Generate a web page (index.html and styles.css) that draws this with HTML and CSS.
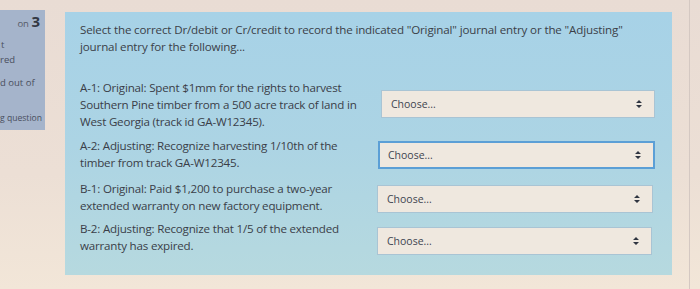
FILE: index.html
```html
<!DOCTYPE html>
<html>
<head>
<meta charset="utf-8">
<link rel="stylesheet" href="styles.css">
</head>
<body>
<div class="page">
  <aside class="info">
    <div class="qno">on <b>3</b></div>
    <div class="st s1">t</div>
    <div class="st s2">red</div>
    <div class="st s3">d out of</div>
    <div class="st s4">g question</div>
  </aside>
  <main class="content">
    <p class="prompt">Select the correct Dr/debit or Cr/credit to record the indicated "Original" journal entry or the "Adjusting" journal entry for the following...</p>
    <div class="rows">
      <div class="row r1">
        <div class="label">A-1: Original: Spent $1mm for the rights to harvest Southern Pine timber from a 500 acre track of land in West Georgia (track id GA-W12345).</div>
        <div class="select"><span>Choose...</span><svg class="arrows" width="6" height="8" viewBox="0 0 6 8"><path d="M3 0 L6 3 L0 3 Z M0 5 L6 5 L3 8 Z" fill="#2f3541"/></svg></div>
      </div>
      <div class="row r2">
        <div class="label">A-2: Adjusting: Recognize harvesting 1/10th of the timber from track GA-W12345.</div>
        <div class="select focus"><span>Choose...</span><svg class="arrows" width="6" height="8" viewBox="0 0 6 8"><path d="M3 0 L6 3 L0 3 Z M0 5 L6 5 L3 8 Z" fill="#2f3541"/></svg></div>
      </div>
      <div class="row r3">
        <div class="label">B-1: Original: Paid $1,200 to purchase a two-year extended warranty on new factory equipment.</div>
        <div class="select"><span>Choose...</span><svg class="arrows" width="6" height="8" viewBox="0 0 6 8"><path d="M3 0 L6 3 L0 3 Z M0 5 L6 5 L3 8 Z" fill="#2f3541"/></svg></div>
      </div>
      <div class="row r4">
        <div class="label">B-2: Adjusting: Recognize that 1/5 of the extended warranty has expired.</div>
        <div class="select"><span>Choose...</span><svg class="arrows" width="6" height="8" viewBox="0 0 6 8"><path d="M3 0 L6 3 L0 3 Z M0 5 L6 5 L3 8 Z" fill="#2f3541"/></svg></div>
      </div>
    </div>
  </main>
  <div class="edge"></div>
</div>
</body>
</html>
```
FILE: styles.css
```css
html, body {
  margin: 0;
  padding: 0;
}
body {
  width: 700px;
  height: 289px;
  overflow: hidden;
  background: linear-gradient(180deg, #e9dcd4 0%, #ecdfd5 60%, #f2e6d8 100%);
  font-family: "Open Sans", "Noto Sans", sans-serif;
  color: #3a3d44;
}
.page {
  display: flex;
  align-items: flex-start;
  height: 289px;
}
.info {
  width: 45px;
  margin-top: 10px;
  height: 120px;
  background: #a5b4cb;
  box-sizing: border-box;
  padding: 2px 0 0 0;
  font-size: 9.5px;
  color: #4a4f5e;
  display: flex;
  flex-direction: column;
  align-items: flex-start;
}
.info .qno {
  align-self: flex-end;
  font-size: 9.5px;
  padding-right: 5px;
  line-height: 18px;
  white-space: nowrap;
  color: #565b68;
}
.info .qno b {
  font-size: 15px;
  color: #333843;
}
.info .st {
  white-space: nowrap;
  line-height: 13px;
}
.info .s1 { margin-top: 5px; padding-left: 1px; }
.info .s2 { margin-top: 2px; }
.info .s3 { margin-top: 10px; }
.info .s4 { margin-top: 23px; font-size: 8.6px; }
.content {
  margin-left: 20px;
  margin-top: 12px;
  width: 607px;
  height: 263px;
  box-sizing: border-box;
  background: linear-gradient(180deg, #a7d2e7 0%, #acd4e4 50%, #b6d9df 100%);
  padding: 9px 17px 0 15px;
}
.prompt {
  margin: 0;
  font-size: 11.6px;
  line-height: 17px;
  color: #3b3f48;
  letter-spacing: -0.15px;
}
.rows {
  margin-top: 24px;
  display: flex;
  flex-direction: column;
}
.row {
  display: flex;
  align-items: flex-start;
  justify-content: space-between;
}
.label {
  width: 285px;
  font-size: 11.6px;
  line-height: 17px;
  color: #3a3e48;
  letter-spacing: -0.2px;
}
.r2 { margin-top: 7px; }
.r3 { margin-top: 9px; }
.r4 { margin-top: 6px; }
.select {
  width: 274px;
  height: 28px;
  box-sizing: border-box;
  background: #efe8df;
  border: 1px solid #a9c4d4;
  display: flex;
  align-items: center;
  justify-content: space-between;
  padding: 0 12px 0 9px;
  font-size: 10.5px;
  color: #3e4450;
}
.r1 .select { margin-top: 11px; }
.r2 .select { margin-top: 4px; width: 277px; }
.r3 .select { margin-top: 5px; width: 276px; margin-right: 2px; }
.r4 .select { margin-top: 7px; width: 275px; margin-right: 3px; }
.select.focus {
  border: 2px solid #5b9fd6;
  padding-left: 8px;
}
.arrows {
  display: block;
}
.edge {
  position: absolute;
  left: 689px;
  top: 0;
  width: 1px;
  height: 289px;
  background: #d4c8c2;
}
```
